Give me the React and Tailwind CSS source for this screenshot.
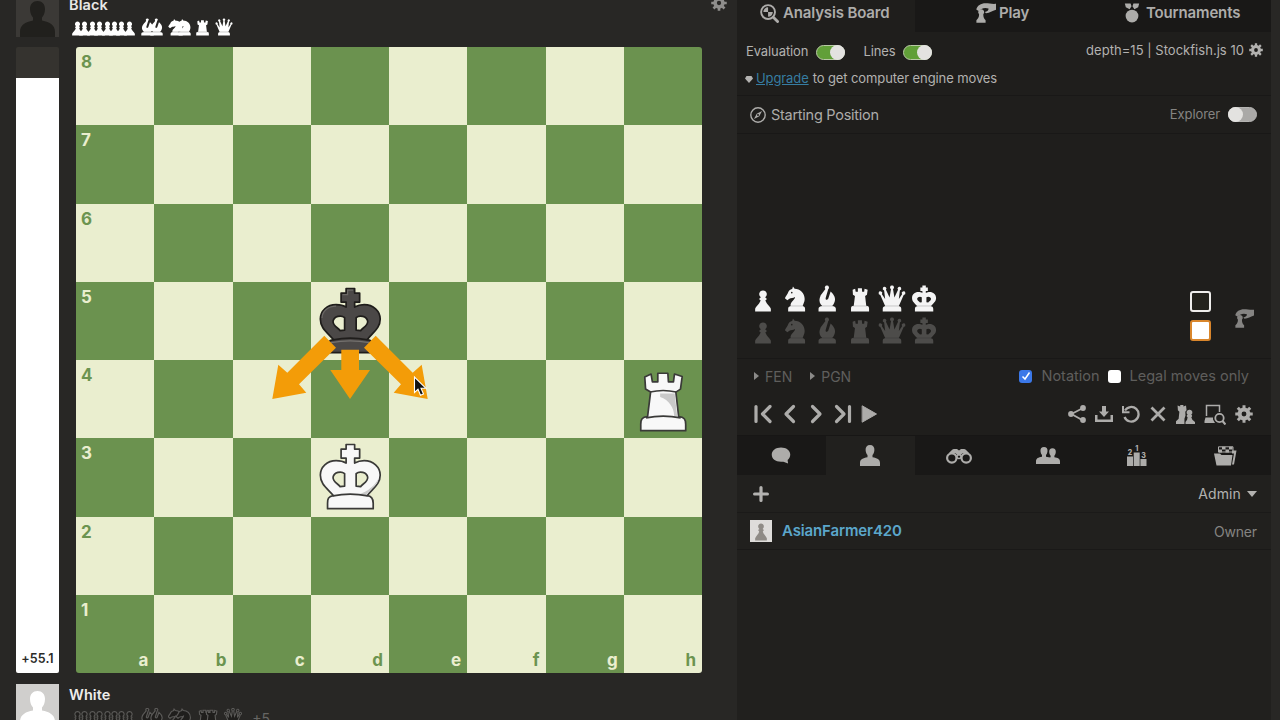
import clsx from 'clsx';

const PIECES = {
  pawn: {
    x: 19,
    w: 40,
    d: 'M39 18.5A9 9 0 0 1 45 34.5V36.5C49 37 49 42 45 42.5C46 51 55 56 58.5 64V70.5H19.5V64C23 56 32 51 33 42.5C29 42 29 37 33 36.5V34.5A9 9 0 0 1 39 18.5Z',
  },
  knight: {
    x: 13,
    w: 52,
    d: 'M34 9L38 14C52 14 63 25 63 40C63 47 60 51 58 57C62 58 64 60 64 64V70.5H22V64C22 60 24 58 28 57C27 46 39 43 39 35C34 39 29 37 25 39L20 43L14 38C15 33 20 29 23 21C25 17 29 16 32 15Z',
  },
  bishop: {
    x: 17,
    w: 45,
    d: 'M39 6.5A5 5 0 0 1 42 15.5L36 36C34 42 39 44 42 39L48 21C57 29 62 39 57 49C56 52 54 55 52 57C58 57.5 61 60 61 64V70.5H18V64C18 60 21 57.5 27 57C21 51 19 44 21 37C23 28 31 22 35 15A5 5 0 0 1 39 6.5Z',
  },
  rook: {
    x: 16,
    w: 46,
    d: 'M20.7 17L27 14L28.3 21.8H33.7V13.2H43.7L44.3 21.8H49.3L50.3 14L58 16.5L56.3 29L51.7 32L54.5 56.5C60 57 61.5 59 61.5 64V70.5H16.7V64C16.7 59 18 57 23.5 56.5L26.5 32L21.5 29Z',
  },
  queen: {
    x: 4,
    w: 70,
    d: 'M39 6.5A4.5 4.5 0 0 1 41.5 15L45 36L54 17A4.5 4.5 0 1 1 58.5 18.5L56 40L64 28A4.5 4.5 0 1 1 68 30L56 57C60 58 62 60 62 64V70.5H16V64C16 60 18 58 22 57L10 30A4.5 4.5 0 1 1 14 28L22 40L19.5 18.5A4.5 4.5 0 1 1 24 17L33 36L36.5 15A4.5 4.5 0 0 1 39 6.5Z',
  },
  king: {
    x: 8,
    w: 62,
    d: 'M35 6.5H43.5V11H48.5V20H43.5V25C47 23 50 22.5 53 22.5C62 22.5 69 29 69 37C69 46 62 50 56 57.5C61 58 62 61 62 65V70.5H16.5V65C16.5 61 17 58 22.5 57.5C16 50 9.3 46 9.3 37C9.3 29 16 22.5 25 22.5C29 22.5 32 23 35 25V20H30V11H35ZM33.5 48V35.5C30 32.5 23 34 22 39C21.5 44 28 46 29 48.5ZM45 48V35.5C48.5 32.5 55.5 34 56.5 39C57 44 50.5 46 49.5 48.5Z',
  },
};

const SHADES = {
  rook: 'M44 33.500H50.500L53 56H50C50 48 45 40 36 37V33.500Z',
  king: 'M67.500 40C66 47 60 50 55 56.500H47C57 53 64 47 67.500 40Z',
};

const PALETTE = ['pawn', 'knight', 'bishop', 'rook', 'queen', 'king'];

function Gear({ className }) {
  return (
    <svg viewBox="0 0 20 20" className={className} fill="none" stroke="currentColor">
      <circle cx="10" cy="10" r="4.900" strokeWidth="4.400" />
      <path
        d="M10 .3V4M10 16V19.700M.3 10H4M16 10H19.700M3.100 3.100L6 6M14 14L16.900 16.900M16.900 3.100L14 6M6 14L3.100 16.900"
        strokeWidth="3.300"
      />
    </svg>
  );
}

function BoardPiece({ type, dark }) {
  return (
    <svg viewBox="0 0 78 78" className="block size-full">
      <path
        d={PIECES[type].d}
        fillRule="evenodd"
        fill={dark ? '#4b4847' : '#f8f8f8'}
        stroke={dark ? '#1f1d1b' : '#3a3a38'}
        strokeWidth="1.7"
        strokeLinejoin="round"
      />
      {!dark && <path d={SHADES[type]} fill="#c9c9c9" />}
      {dark && <path d="M11 36C11 29 17 24 25 24M31.500 12.500H36.500V8H42" fill="none" stroke="#6b6866" strokeWidth="1.2" />}
      <path d="M22 57.7C33 55.5 45 55.5 56.500 57.700" fill="none" stroke={dark ? '#1f1d1b' : '#3a3a38'} strokeWidth="1.7" />
      {type === 'rook' && <path d="M26 32C34 30 44 30 52 32" fill="none" stroke="#3a3a38" strokeWidth="1.5" />}
      {dark && <path d="M20 60.500C33 58 45 58 58 60.500" fill="none" stroke="#74716e" strokeWidth="1.3" />}
    </svg>
  );
}

function MiniPiece({ type, className, outline }) {
  const { x, w, d } = PIECES[type];
  return (
    <svg viewBox={`${x} 5 ${w} 67`} preserveAspectRatio="none" className={clsx('block shrink-0', className)}>
      <path d={d} fillRule="evenodd" fill="currentColor" stroke={outline || 'none'} strokeWidth={outline ? 4 : 0} />
      {!outline && type !== 'pawn' && <path d="M20 57H58" stroke="#282725" strokeOpacity="0.45" strokeWidth="2" />}
    </svg>
  );
}

function PawnHand({ className }) {
  return (
    <svg viewBox="0 0 20 20" className={className} fill="currentColor">
      <path d="M.3 6.500C1 2.500 5 .2 9.500 .2C13 .2 16 1.200 20 .8V6.800C16 8 14 10 10 10.300L8.800 9C11 8.500 13 7 12.500 5.500C10 4.500 7.500 4.800 5.500 6L2.500 8Z" />
      <path d="M5.200 6.200A2.900 2.900 0 0 1 7.300 11.200C7.300 14 8 15.500 9.600 17.200V19.800H.4V17.200C2 15.500 3.100 14 3.100 11.200A2.900 2.900 0 0 1 5.200 6.200Z" />
    </svg>
  );
}

function Person({ className }) {
  return (
    <svg viewBox="0 0 20 21" className={className} fill="currentColor">
      <path d="M10 0C13 0 14.600 2 14.400 5C14.200 7.500 13.500 9 12.500 10V12.200C17 13 20 14 20 18V21H0V18C0 14 3 13 7.500 12.200V10C6.500 9 5.800 7.500 5.600 5C5.400 2 7 0 10 0Z" />
    </svg>
  );
}

function Avatar({ dark, className }) {
  return (
    <div className={clsx('h-[43px] w-[43px] overflow-hidden', dark ? 'bg-[#3b3936]' : 'bg-[#d0cfcd]', className)}>
      <svg viewBox="0 0 43 43" className="block size-full" fill={dark ? '#21201d' : '#ffffff'}>
        <path d="M21.500 7C26 7 29 10 29 15C29 19 27.500 22 26 23.500V26.500C34 28 39 31 39 38V43H4V38C4 31 9 28 17 26.500V23.500C15.500 22 14 19 14 15C14 10 17 7 21.500 7Z" />
      </svg>
    </div>
  );
}

function Toggle({ on }) {
  return (
    <span className={clsx('flex h-[15px] w-[29px] rounded-full border', on ? 'justify-end border-[#b9c9a5] bg-[#619f38]' : 'border-[#b5b4b2] bg-[#aaa9a7]')}>
      <span className="-my-px -mx-px size-[15px] rounded-full bg-[#e3e2e0]" />
    </span>
  );
}

const ranks = [8, 7, 6, 5, 4, 3, 2, 1];
const files = ['a', 'b', 'c', 'd', 'e', 'f', 'g', 'h'];
const position = {
  d5: { type: 'king', dark: true },
  d3: { type: 'king' },
  h4: { type: 'rook' },
};

function Board() {
  return (
    <div className="relative h-[626px] w-[626px] shrink-0">
      <div className="grid size-full grid-cols-8 grid-rows-8 overflow-hidden rounded-[3px]">
        {ranks.map((rank, r) =>
          files.map((file, f) => {
            const light = (r + f) % 2 === 0;
            const piece = position[file + rank];
            return (
              <div
                key={file + rank}
                className={clsx('relative text-[17px] leading-none font-bold', light ? 'bg-[#eaeecf] text-[#6c9450]' : 'bg-[#6b924f] text-[#eaeecf]')}
              >
                {f === 0 && <span className="absolute top-[7px] left-[5px]">{rank}</span>}
                {r === 7 && <span className="absolute right-[6px] bottom-[4px]">{file}</span>}
                {piece && <BoardPiece {...piece} />}
              </div>
            );
          }),
        )}
      </div>
      <svg viewBox="0 0 626 626" className="absolute inset-0 size-full">
        <g fill="#f39c08">
          <path d="M248.300 288.700L260 300.700L223 337.300L230.300 345.700L196.300 352L202.300 317.700L211.300 325.700Z" />
          <path d="M265.300 302.700H283V323H294L274 352L254.300 323H265.300Z" />
          <path d="M299.700 288.700L288 300.700L325 337.300L317.700 345.700L351.700 352L345.700 317.700L336.700 325.700Z" />
        </g>
        <path d="M338.500 330V345.500L342 342.300L344.500 348.200L347.500 347L345 341.200H349.800Z" fill="#111" stroke="#fff" strokeWidth="1.100" />
      </svg>
    </div>
  );
}

function Captured({ outline, className }) {
  const rooks = outline ? 2 : 1;
  return (
    <div className={clsx('flex h-[18px] items-end', className)}>
      <div className="flex">
        {Array.from({ length: 8 }).map((_, i) => (
          <MiniPiece key={i} type="pawn" outline={outline} className="-mr-[3.600px] h-[18px] w-[11px]" />
        ))}
      </div>
      <div className="ml-[10px] flex">
        <MiniPiece type="bishop" outline={outline} className="-mr-[4px] h-[18px] w-[13px]" />
        <MiniPiece type="bishop" outline={outline} className="h-[18px] w-[13px]" />
      </div>
      <div className="ml-[5px] flex">
        <MiniPiece type="knight" outline={outline} className="-mr-[7px] h-[18px] w-[15px]" />
        <MiniPiece type="knight" outline={outline} className="h-[18px] w-[15px]" />
      </div>
      <div className={clsx('flex', outline ? 'ml-[7px]' : 'ml-[5px]')}>
        {Array.from({ length: rooks }).map((_, i) => (
          <MiniPiece key={i} type="rook" outline={outline} className={clsx('h-[18px] w-[13px]', i > 0 && '-ml-[6px]')} />
        ))}
      </div>
      <MiniPiece type="queen" outline={outline} className="ml-[6px] h-[18px] w-[18px]" />
      {outline && <span className="ml-[10px] text-[14px] leading-[15px] text-[#666563]">+5</span>}
    </div>
  );
}

function GameArea() {
  return (
    <section className="flex w-[737px] shrink-0 flex-col pl-4">
      <div className="flex h-[47px] shrink-0">
        <Avatar dark className="-mt-[6px]" />
        <div className="ml-[10px] flex-1">
          <div className="-mt-[5px] h-[20px] text-[14.500px] leading-[20px] font-semibold tracking-[0.1px] text-[#e9e8e6]">Black</div>
          <Captured className="mt-[3px] ml-[3px] text-white" />
        </div>
        <Gear className="-mt-[5px] mr-[10px] size-4 text-[#8f8e8c]" />
      </div>
      <div className="flex h-[626px] shrink-0 gap-[17px]">
        <div className="flex w-[43px] flex-col overflow-hidden rounded-[2px]">
          <div className="h-[31px] bg-[#35332f]" />
          <div className="flex flex-1 items-end justify-center bg-white pb-[6px] text-[12.500px] leading-4 font-semibold tracking-[0.1px] text-[#2b2a28]">+55.1</div>
        </div>
        <Board />
      </div>
      <div className="mt-[11px] flex">
        <Avatar />
        <div className="ml-[10px]">
          <div className="mt-px h-[20px] text-[14.500px] leading-[20px] font-semibold tracking-[0.1px] text-[#eeedeb]">White</div>
          <Captured outline="#5b5a58" className="mt-[3px] ml-[3px] text-[#1f1e1c]" />
        </div>
      </div>
    </section>
  );
}

function TopTabs() {
  return (
    <div className="grid h-[32px] grid-cols-3 text-[15px] leading-[18px] font-semibold tracking-[-0.15px] text-[#adacaa]">
      <div className="flex items-start gap-[4px] pt-[3px] pl-[23px]">
        <svg viewBox="0 0 20 20" className="mt-px size-[19px]" fill="none" stroke="currentColor">
          <circle cx="8.500" cy="8.500" r="7.300" strokeWidth="2" />
          <path d="M14 14L18.500 18.500" strokeWidth="3" strokeLinecap="round" />
          <path d="M8.500 3.500V8.500H3.500A5 5 0 0 1 8.500 3.500ZM8.500 8.500H13.500A5 5 0 0 1 8.500 13.500Z" fill="currentColor" stroke="none" />
        </svg>
        <span className="pt-[1px]">Analysis Board</span>
      </div>
      <div className="flex items-start gap-[3px] bg-[#191817] pt-[3px] pl-[61px]">
        <PawnHand className="size-[20px]" />
        <span className="pt-[1px]">Play</span>
      </div>
      <div className="flex items-start gap-[6px] bg-[#191817] pt-[3px] pl-[31px]">
        <svg viewBox="0 0 16 21" className="h-[20px] w-[16px]" fill="currentColor">
          <path d="M.5 .5H6.500L7.500 3.500L5.500 6.500L1.500 4.500ZM15.500 .5H9.500L8.500 3.500L10.500 6.500L14.500 4.500Z" />
          <circle cx="8" cy="13.700" r="6.700" />
        </svg>
        <span className="pt-[1px]">Tournaments</span>
      </div>
    </div>
  );
}

function EngineRow() {
  return (
    <div className="flex h-[64px] flex-col border-b border-[#191817] pt-[10px] text-[#b3b2b0]">
      <div className="flex h-[20px] items-center pr-[8px] pl-[9px] text-[13px] tracking-[-0.1px]">
        <span className="mr-[8px]">Evaluation</span>
        <Toggle on />
        <span className="mr-[7px] ml-[18px]">Lines</span>
        <Toggle on />
        <div className="-mt-[2px] ml-auto flex items-center tracking-[0.03px]">
          <span>depth=15 | Stockfish.js 10</span>
          <Gear className="-mt-[2px] ml-[5px] size-[14px]" />
        </div>
      </div>
      <div className="mt-[7px] flex h-[20px] items-center pl-[8px] text-[13px] tracking-[-0.1px]">
        <svg viewBox="0 0 8 7" className="mr-[3px] h-[7px] w-[8px]" fill="currentColor">
          <path d="M1.500 0H6.500L8 2.500L4 7L0 2.500Z" />
        </svg>
        <span className="mr-[4px] text-[#367da2] underline">Upgrade</span>
        <span>to get computer engine moves</span>
      </div>
    </div>
  );
}

function MoveList() {
  return (
    <>
      <div className="flex h-[38px] items-center border-b border-[#191817] pr-[14px] pl-[13px] text-[#adacaa]">
        <svg viewBox="0 0 16 16" className="size-[16px]">
          <circle cx="8" cy="8" r="7.200" fill="none" stroke="currentColor" strokeWidth="1.400" />
          <path d="M12 4L9.300 9.300L4 12L6.700 6.700Z" fill="currentColor" />
          <circle cx="8" cy="8" r="1" fill="#1f1e1c" />
        </svg>
        <span className="ml-[5px] text-[14.500px] tracking-[-0.27px]">Starting Position</span>
        <span className="mr-[8px] ml-auto text-[13px] tracking-[-0.1px] text-[#858482]">Explorer</span>
        <Toggle />
      </div>
      <div className="h-[149px]" />
    </>
  );
}

function Palette() {
  return (
    <div className="flex h-[76px] items-start border-b border-[#191817]">
      <div className="ml-[10px] grid grid-cols-6 gap-y-[5px] pt-[2px]">
        {['text-[#f4f4f4]', 'text-[#4d4c4a]'].map((tone) =>
          PALETTE.map((type) => (
            <div key={tone + type} className="flex h-[27px] w-[32.200px] justify-center">
              <svg viewBox="0 5 78 67" className={clsx('block h-[27px] w-[32px]', tone)}>
                <path d={PIECES[type].d} fillRule="evenodd" fill="currentColor" />
                {type !== 'pawn' && <path d="M20 57H58" stroke="#1f1e1c" strokeOpacity="0.35" strokeWidth="1.500" />}
                {type === 'knight' && <circle cx="31" cy="24" r="2" fill="#1f1e1c" />}
              </svg>
            </div>
          )),
        )}
      </div>
      <div className="ml-auto flex flex-col gap-[8px] pt-[8px]">
        <div className="size-[21px] rounded-[3px] border-2 border-[#eeedeb] bg-[#23221c]" />
        <div className="size-[21px] rounded-[3px] border-2 border-[#d9862c] bg-white" />
      </div>
      <PawnHand className="mt-[26px] mr-[17px] ml-[24px] size-[19px] text-[#858482]" />
    </div>
  );
}

function Options() {
  return (
    <div className="flex h-[34px] items-center pr-[22px] pl-[17px] text-[14.500px] text-[#5f5e5c]">
      <svg viewBox="0 0 5 8" className="mr-[6px] h-[8px] w-[5px] text-[#8b8a88]" fill="currentColor">
        <path d="M0 0L5 4L0 8Z" />
      </svg>
      <span className="text-[14px]">FEN</span>
      <svg viewBox="0 0 5 8" className="mr-[6px] ml-[18px] h-[8px] w-[5px] text-[#8b8a88]" fill="currentColor">
        <path d="M0 0L5 4L0 8Z" />
      </svg>
      <span className="text-[14px]">PGN</span>
      <span className="ml-auto flex size-[13px] items-center justify-center rounded-[3px] bg-[#3b78e8]">
        <svg viewBox="0 0 10 10" className="size-[10px]" fill="none" stroke="#fff" strokeWidth="1.500">
          <path d="M1.500 5.500L4 8L8.500 1.500" />
        </svg>
      </span>
      <span className="ml-[9px]">Notation</span>
      <span className="ml-[8px] size-[13px] rounded-[3px] bg-white" />
      <span className="ml-[9px]">Legal moves only</span>
    </div>
  );
}

function Controls() {
  return (
    <div className="flex h-[42px] items-center pr-[18px] pl-[17px] text-[#adacaa]">
      <svg viewBox="0 0 124 20" className="h-[20px] w-[124px]" fill="none" stroke="currentColor" strokeWidth="3.200" strokeLinecap="round" strokeLinejoin="round">
        <path d="M2 2.500V17.500M16 2.500L8.500 10L16 17.500" />
        <path d="M39.500 2.500L32 10L39.500 17.500" />
        <path d="M58.500 2.500L66 10L58.500 17.500" />
        <path d="M82.500 2.500L90 10L82.500 17.500M95.500 2.500V17.500" />
        <path d="M108.500 2L122.500 10L108.500 18Z" fill="currentColor" strokeWidth="1" />
      </svg>
      <div className="ml-auto flex items-center gap-[9px]">
        <svg viewBox="0 0 18 18" className="size-[18px]" fill="currentColor">
          <path d="M15 3L3.500 9L15 15.500" fill="none" stroke="currentColor" strokeWidth="1.800" />
          <circle cx="15" cy="3" r="2.900" />
          <circle cx="3" cy="9" r="2.900" />
          <circle cx="15" cy="15" r="2.900" />
        </svg>
        <svg viewBox="0 0 18 18" className="size-[18px]" fill="currentColor">
          <path d="M7 1H11V6.500H14L9 12L4 6.500H7ZM0 10H2.500V14.500H15.500V10H18V17H0Z" />
        </svg>
        <svg viewBox="0 0 18 18" className="size-[18px]" fill="none" stroke="currentColor" strokeWidth="2.300">
          <path d="M3 5.500A7.300 7.300 0 1 1 2.500 12" />
          <path d="M1 1V7.200H7.500" strokeWidth="2" />
        </svg>
        <svg viewBox="0 0 18 18" className="size-[18px]" fill="none" stroke="currentColor" strokeWidth="2.800">
          <path d="M2.500 2.500L15.500 15.500M15.500 2.500L2.500 15.500" />
        </svg>
        <svg viewBox="0 0 18 18" className="size-[19px]" fill="currentColor">
          <path d="M1.500 .5L4 1.500V0H7V1.500L9.500 .5L10 5L8.800 6.500L9 10L8 13V18H0V15.500L2.500 13L3.200 6.500L1.800 5Z" />
          <path d="M12.700 4.500A2.500 2.500 0 0 1 14.500 9L15.200 10V11L14.500 11.500L15.500 14L18 16V18H9V16L10.500 14L11 11.500L10.200 11V10L11 9A2.500 2.500 0 0 1 12.700 4.500Z" />
        </svg>
        <svg viewBox="0 0 22 21" className="h-[21px] w-[22px]" fill="none" stroke="currentColor">
          <path d="M2.500 12V1.500H15.500V8" strokeWidth="1.500" />
          <path d="M1.500 13.500H9V15.500L11 19H.5V17Z" fill="currentColor" stroke="none" />
          <circle cx="15.500" cy="14" r="4.200" strokeWidth="1.800" />
          <path d="M18.500 17L21.500 20.500" strokeWidth="2.200" />
        </svg>
        <Gear className="size-[18px]" />
      </div>
    </div>
  );
}

function SideTabs() {
  const icons = [
    <svg key="chat" viewBox="0 0 20 18" className="h-[17px] w-[20px]" fill="currentColor">
      <path d="M10 .5C15.500 .5 19.800 3.500 19.800 8C19.800 10.500 18.500 12.500 17 13.700L17.500 17.500L12.500 15.500C5 16.500 .2 13 .2 8C.2 3.500 4.500 .5 10 .5Z" />
    </svg>,
    <Person key="user" className="h-[21px] w-[20px]" />,
    <svg key="watch" viewBox="0 0 26 16" className="h-[16px] w-[26px]" fill="none" stroke="currentColor" strokeWidth="2.200">
      <circle cx="5.800" cy="10" r="4.700" />
      <circle cx="20.200" cy="10" r="4.700" />
      <path d="M3 5C5 3 6.500 1 8 1H11L13 2.500L15 1H18C19.500 1 21 3 23 5L17 5L13 8L9 5Z" fill="currentColor" stroke="none" />
      <circle cx="13" cy="8.500" r="2" strokeWidth="1.500" />
    </svg>,
    <div key="friends" className="flex items-end">
      <Person className="h-[17px] w-[16px]" />
      <Person className="-ml-[7px] h-[16px] w-[15px]" />
    </div>,
    <svg key="podium" viewBox="0 0 20 21" className="h-[21px] w-[20px]" fill="currentColor" fontSize="7" fontWeight="800" textAnchor="middle">
      <path d="M0 11.500H6V21H0ZM6.700 7.500H12.700V21H6.700ZM13.400 14H19.500V21H13.400Z" />
      <text x="3" y="10">2</text>
      <text x="9.700" y="6">1</text>
      <text x="16.500" y="12.500">3</text>
    </svg>,
    <svg key="folder" viewBox="0 0 23 20" className="h-[20px] w-[23px]" fill="currentColor">
      <path d="M4.500 .8H19V6H4.500Z" fill="none" stroke="currentColor" strokeWidth="1" />
      <path d="M4.500 3.500H8V.8H11.500V3.500H15V.8H18.500V3.500H15V6.500H11.500V3.500H8V6.500H4.500Z" />
      <path d="M0 7.500H6L7.500 9H18.500L17 19.500H2.500ZM18 4.500H22.500L20 18.500H18L20 7.500H18Z" />
    </svg>,
  ];
  return (
    <div className="grid h-[40px] grid-cols-6 border-t border-[#171615] text-[#adacaa]">
      {icons.map((icon, i) => (
        <div key={i} className={clsx('flex items-center justify-center pr-[2px]', i === 1 ? 'bg-[#21201e]' : 'bg-[#191817]')}>
          {icon}
        </div>
      ))}
    </div>
  );
}

function Members() {
  return (
    <div className="flex-1 bg-[#21201e]">
      <div className="flex h-[38px] items-center border-b border-[#1b1a19] pr-[14px] pl-[16px] text-[#b3b2b0]">
        <svg viewBox="0 0 16 16" className="size-[16px]" stroke="currentColor" strokeWidth="3.200" strokeLinecap="round">
          <path d="M8 1.600V14.400M1.600 8H14.400" />
        </svg>
        <span className="ml-auto text-[14px] tracking-[0.1px]">Admin</span>
        <svg viewBox="0 0 10 6" className="ml-[6px] h-[6px] w-[10px]" fill="currentColor">
          <path d="M0 0H10L5 6Z" />
        </svg>
      </div>
      <div className="flex h-[37px] items-center border-b border-[#1a1918] pr-[14px] pl-[13px]">
        <div className="flex size-[22px] items-center justify-center bg-[#dedcda]">
          <MiniPiece type="pawn" className="-mt-[2px] h-[22px] w-[12px] text-[#8f8b86]" />
        </div>
        <span className="ml-[10px] text-[15px] font-semibold tracking-[-0.13px] text-[#5ba6cb]">AsianFarmer420</span>
        <span className="ml-auto text-[14px] tracking-[-0.15px] text-[#858482]">Owner</span>
      </div>
    </div>
  );
}

export default function App() {
  return (
    <main className="flex h-[720px] w-[1280px] overflow-hidden bg-[#282725] font-['Inter',sans-serif]">
      <GameArea />
      <aside className="flex w-[534px] shrink-0 flex-col bg-[#1f1e1c]">
        <TopTabs />
        <EngineRow />
        <MoveList />
        <Palette />
        <Options />
        <Controls />
        <SideTabs />
        <Members />
      </aside>
    </main>
  );
}
